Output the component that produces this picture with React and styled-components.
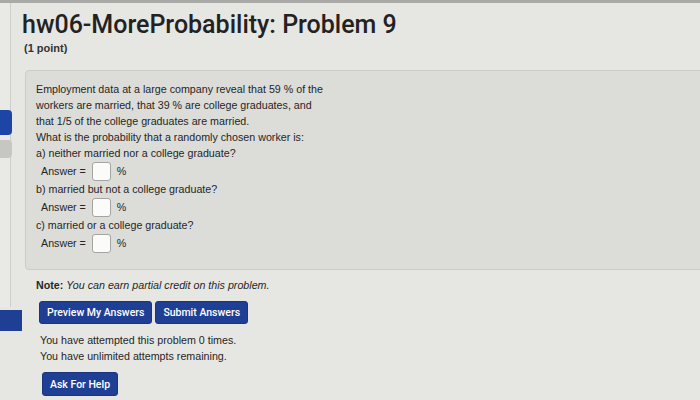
import styled, { createGlobalStyle } from 'styled-components'

const GlobalStyle = createGlobalStyle`
	html, body {
		margin: 0;
		padding: 0;
		overflow: hidden;
	}
	body {
		background-color: #e6e6e2;
		font-family: 'Liberation Sans', Arial, sans-serif;
		color: #262626;
	}
`

export default () => {
	return (
		<>
			<GlobalStyle />
			<Page>
				<Sidebar>
					<Rail>
						<RailTop />
						<Pill $color="#1d45a6" $height={25} />
						<Pill $color="#c6c6c2" $height={18} $gap={5} />
					</Rail>
					<NavBar />
				</Sidebar>
				<Main>
					<Title>hw06-MoreProbability: Problem 9</Title>
					<Points>(1 point)</Points>
					<Well>
						<Line>Employment data at a large company reveal that 59 % of the</Line>
						<Line>workers are married, that 39 % are college graduates, and</Line>
						<Line>that 1/5 of the college graduates are married.</Line>
						<Line>What is the probability that a randomly chosen worker is:</Line>
						<Line>a) neither married nor a college graduate?</Line>
						<AnswerRow>
							Answer = <AnswerBox /> %
						</AnswerRow>
						<Line>b) married but not a college graduate?</Line>
						<AnswerRow>
							Answer = <AnswerBox /> %
						</AnswerRow>
						<Line>c) married or a college graduate?</Line>
						<AnswerRow>
							Answer = <AnswerBox /> %
						</AnswerRow>
					</Well>
					<Below>
						<Note>
							<b>Note:</b> <i>You can earn partial credit on this problem.</i>
						</Note>
						<Buttons>
							<Button>Preview My Answers</Button>
							<Button>Submit Answers</Button>
						</Buttons>
						<Attempts>
							<Line>You have attempted this problem 0 times.</Line>
							<Line>You have unlimited attempts remaining.</Line>
						</Attempts>
						<HelpButton>Ask For Help</HelpButton>
					</Below>
				</Main>
			</Page>
		</>
	)
}

const Page = styled.div`
	display: flex;
	width: 700px;
	height: 400px;
	border-top: 3px solid #a9a9a7;
	box-sizing: border-box;
	overflow: hidden;
`

const Sidebar = styled.div`
	width: 22px;
	flex-shrink: 0;
	display: flex;
	flex-direction: column;
`

const Rail = styled.div`
	width: 10px;
	height: 304px;
	border-right: 1px solid #cdcdc9;
	background-color: #e9e9e6;
	display: flex;
	flex-direction: column;
`

const RailTop = styled.div`
	height: 107px;
`

const Pill = styled.div`
	width: 12px;
	height: ${(p) => p.$height}px;
	margin-top: ${(p) => p.$gap || 0}px;
	background-color: ${(p) => p.$color};
	border-radius: 0 4px 4px 0;
`

const NavBar = styled.div`
	width: 22px;
	height: 21px;
	margin-top: 3px;
	background-color: #1f3f94;
`

const Main = styled.div`
	flex: 1;
	display: flex;
	flex-direction: column;
	min-width: 0;
`

const Title = styled.h1`
	margin: 8px 0 0 0;
	font-family: Roboto, 'Liberation Sans', sans-serif;
	font-size: 25px;
	line-height: 28px;
	font-weight: 500;
	color: #222;
	white-space: nowrap;
`

const Points = styled.div`
	margin: 2px 0 0 2px;
	font-size: 11px;
	line-height: 14px;
	font-weight: 700;
	color: #333;
`

const Well = styled.div`
	margin: 15px -12px 0 3px;
	padding: 10px 10px 16px 10px;
	background-color: #dcdcd8;
	border: 1px solid #cbcbc7;
	border-radius: 4px;
	font-size: 10.7px;
`

const Line = styled.div`
	line-height: 16px;
	white-space: nowrap;
`

const AnswerRow = styled.div`
	height: 20px;
	display: flex;
	align-items: center;
	gap: 3px;
	padding-left: 5px;
	white-space: pre;
`

const AnswerBox = styled.span`
	display: inline-block;
	width: 17px;
	height: 17px;
	background-color: #fbfbfa;
	border: 1px solid #a4a4a2;
	border-radius: 3px;
`

const Below = styled.div`
	padding-left: 14px;
	font-size: 10.7px;
	display: flex;
	flex-direction: column;
	align-items: flex-start;
`

const Note = styled.div`
	margin-top: 7px;
	line-height: 16px;
`

const Buttons = styled.div`
	display: flex;
	gap: 3px;
	margin-top: 8px;
	padding-left: 3px;
`

const Button = styled.button`
	height: 23px;
	padding: 0 7px;
	background-color: #1f3f94;
	color: #fff;
	border: 1px solid #1a3580;
	border-radius: 3px;
	font-family: Roboto, 'Liberation Sans', sans-serif;
	font-size: 10.5px;
	font-weight: 500;
`

const Attempts = styled.div`
	margin-top: 8px;
	padding-left: 4px;
`

const HelpButton = styled(Button)`
	margin-top: 8px;
	margin-left: 6px;
	height: 24px;
`
